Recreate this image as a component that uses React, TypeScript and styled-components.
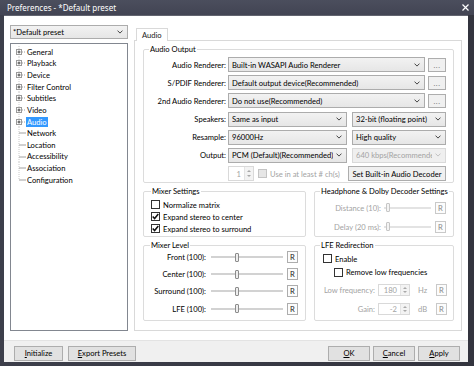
import React from 'react';
import styled, { createGlobalStyle } from 'styled-components';

const GlobalStyle = createGlobalStyle`
  html, body { margin: 0; padding: 0; background: #2f3038; }
  body {
    font-family: Lato, "Noto Sans", sans-serif;
    font-size: 7.6px;
    color: #000;
  }
  * { box-sizing: border-box; }
`;

const Window = styled.div`
  width: 474px;
  height: 366px;
  display: flex;
  flex-direction: column;
  background: linear-gradient(to right, #3d3f4b, #33343e);
`;

const TitleBar = styled.div`
  height: 15px;
  flex: none;
  display: flex;
  align-items: center;
  justify-content: space-between;
  padding: 0 5px 0 7px;
  color: #fff;
  font-family: "Noto Sans", sans-serif;
  font-size: 8px;
  background: linear-gradient(#4b4e5d, #424453);
`;

const Client = styled.div`
  flex: 1;
  margin: 0 6px 4px 4px;
  background: #fff;
  display: flex;
  flex-direction: column;
  border-top: 1px solid #62646f;
  min-height: 0;
`;

const Main = styled.div`
  flex: 1;
  display: flex;
  gap: 6px;
  padding: 9px 6px 9px 6px;
  min-height: 0;
`;

const LeftCol = styled.div`
  width: 118px;
  flex: none;
  display: flex;
  flex-direction: column;
  gap: 4px;
`;

const RightCol = styled.div`
  flex: 1;
  display: flex;
  flex-direction: column;
  min-width: 0;
`;

const Chevron = ({ color = '#444' }: { color?: string }) => (
  <svg width="6" height="4" viewBox="0 0 6 4">
    <path d="M0.5 0.6 L3 3.1 L5.5 0.6" fill="none" stroke={color} strokeWidth="1" />
  </svg>
);

const ComboBox = styled.div<{ $disabled?: boolean }>`
  display: flex;
  align-items: center;
  gap: 3px;
  height: 15px;
  padding: 0 4px 0 3px;
  border: 1px solid ${p => (p.$disabled ? '#d9d9d9' : '#acacac')};
  background: ${p => (p.$disabled ? '#efefef' : 'linear-gradient(#f2f2f2, #e6e6e6)')};
  color: ${p => (p.$disabled ? '#a3a3a3' : '#000')};
  white-space: nowrap;
  min-width: 0;
`;

const ComboText = styled.span`
  flex: 1;
  min-width: 0;
  overflow: hidden;
`;

const Combo = ({ text, disabled }: { text: string; disabled?: boolean }) => (
  <ComboBox $disabled={disabled}>
    <ComboText>{text}</ComboText>
    <Chevron color={disabled ? '#c0c0c0' : '#444'} />
  </ComboBox>
);

const PresetCombo = styled(ComboBox)`
  height: 14px;
  padding-left: 2px;
`;

const TreeBox = styled.div`
  flex: 1;
  border: 1px solid #828790;
  padding: 2px 0 0 5px;
  display: flex;
  flex-direction: column;
`;

const TreeItem = styled.div`
  height: 11.66px;
  display: flex;
  align-items: center;
`;

const TreeLabel = styled.span<{ $selected?: boolean }>`
  padding: 0 1px;
  line-height: 10.5px;
  background: ${p => (p.$selected ? '#3399ff' : 'transparent')};
  color: ${p => (p.$selected ? '#fff' : '#000')};
  white-space: nowrap;
`;

const TreeConnector = ({ expandable, last }: { expandable: boolean; last: boolean }) => (
  <svg width="10" height="12" viewBox="0 0 10 12">
    <line x1="3" y1="0" x2="3" y2={last ? 6 : 12} stroke="#c8c8c8" strokeWidth="1" strokeDasharray="1 1" />
    <line x1={expandable ? 6 : 3} y1="6" x2="10" y2="6" stroke="#a0a0a0" strokeWidth="1" strokeDasharray={expandable ? '1 1' : '0'} />
    {expandable && (
      <g>
        <rect x="0.5" y="3.5" width="5" height="5" fill="#fff" stroke="#9a9a9a" strokeWidth="1" />
        <line x1="1.5" y1="6" x2="4.5" y2="6" stroke="#444" strokeWidth="1" />
        <line x1="3" y1="4.5" x2="3" y2="7.5" stroke="#444" strokeWidth="1" />
      </g>
    )}
  </svg>
);

const TabStrip = styled.div`
  height: 15px;
  flex: none;
  display: flex;
  align-items: flex-end;
  padding-left: 2px;
`;

const Tab = styled.div`
  height: 13px;
  padding: 0 5px;
  display: flex;
  align-items: center;
  border: 1px solid #d9d9d9;
  border-bottom: none;
  background: #fff;
  margin-bottom: -1px;
  position: relative;
  z-index: 1;
  color: #222;
`;

const Panel = styled.div`
  flex: 1;
  border: 1px solid #d9d9d9;
  padding: 3px 7px 0 8px;
  display: flex;
  flex-direction: column;
  gap: 3.3px;
`;

const Group = styled.fieldset<{ $pad: string; $gap?: number }>`
  margin: 0;
  min-width: 0;
  border: 1px solid #dcdcdc;
  border-radius: 2px;
  padding: ${p => p.$pad};
  display: flex;
  flex-direction: column;
  gap: ${p => p.$gap ?? 0}px;
`;

const Legend = styled.legend<{ $offset: number }>`
  padding: 0 1px;
  margin-left: ${p => p.$offset}px;
  line-height: 11px;
  color: #000;
  white-space: nowrap;
`;

const FormRow = styled.div`
  display: grid;
  grid-template-columns: 78px 1fr;
  column-gap: 2px;
  align-items: center;
  height: 15px;
`;

const FieldLabel = styled.span<{ $disabled?: boolean }>`
  text-align: right;
  white-space: nowrap;
  color: ${p => (p.$disabled ? '#a3a3a3' : '#000')};
`;

const Controls = styled.div<{ $cols: string; $gap: number }>`
  display: grid;
  grid-template-columns: ${p => p.$cols};
  column-gap: ${p => p.$gap}px;
  align-items: center;
  min-width: 0;
`;

const FlexControls = styled.div`
  display: flex;
  align-items: center;
  gap: 4px;
  min-width: 0;
`;

const SmallButton = styled.div<{ $disabled?: boolean; $w?: number }>`
  height: ${p => (p.$w ? 15 : 14)}px;
  width: ${p => (p.$w ? `${p.$w}px` : 'auto')};
  display: flex;
  align-items: center;
  justify-content: center;
  border: 1px solid ${p => (p.$disabled ? '#cfcfcf' : '#adadad')};
  background: ${p => (p.$disabled ? '#f6f6f6' : '#f0f0f0')};
  color: ${p => (p.$disabled ? '#a0a0a0' : '#000')};
  white-space: nowrap;
`;

const DecoderButton = styled(SmallButton)`
  margin-left: auto;
`;

const DotsButton = styled(SmallButton)`
  color: #777;
  letter-spacing: 0.5px;
  align-items: flex-end;
  padding-bottom: 2px;
  line-height: 8px;
`;

const ResetButton = styled.div<{ $disabled?: boolean }>`
  width: 11px;
  height: 12px;
  display: flex;
  align-items: center;
  justify-content: center;
  border: 1px solid ${p => (p.$disabled ? '#c9c9c9' : '#adadad')};
  background: #fcfcfc;
  color: ${p => (p.$disabled ? '#8a8a8a' : '#222')};
`;

const CheckBoxBox = styled.span<{ $disabled?: boolean }>`
  width: 9px;
  height: 9px;
  flex: none;
  display: inline-flex;
  align-items: center;
  justify-content: center;
  border: 1px solid ${p => (p.$disabled ? '#c4c4c4' : '#333')};
  background: ${p => (p.$disabled ? '#e6e6e6' : '#fff')};
`;

const CheckBox = ({ checked, disabled }: { checked?: boolean; disabled?: boolean }) => (
  <CheckBoxBox $disabled={disabled}>
    {checked && (
      <svg width="7" height="7" viewBox="0 0 7 7">
        <path d="M0.7 3.6 L2.6 5.6 L6.3 1.1" fill="none" stroke="#111" strokeWidth="1.5" />
      </svg>
    )}
  </CheckBoxBox>
);

const CheckRow = styled.div<{ $indent?: number; $disabled?: boolean; $top?: number }>`
  height: 12px;
  display: flex;
  align-items: center;
  gap: 3px;
  padding-left: ${p => p.$indent ?? 0}px;
  margin-top: ${p => p.$top ?? 0}px;
  color: ${p => (p.$disabled ? '#a3a3a3' : '#000')};
  white-space: nowrap;
`;

const SpinBox = styled.div<{ $w: number; $h: number }>`
  width: ${p => p.$w}px;
  height: ${p => p.$h}px;
  display: flex;
  border: 1px solid #d9d9d9;
  background: #fff;
  flex: none;
`;

const SpinValue = styled.span`
  flex: 1;
  padding-right: 3px;
  color: #a3a3a3;
  display: flex;
  align-items: center;
  justify-content: flex-end;
`;

const SpinArrows = styled.span`
  width: 9px;
  display: flex;
  flex-direction: column;
  justify-content: space-evenly;
  align-items: center;
  background: #f3f3f3;
  border-left: 1px solid #e4e4e4;
`;

const Spin = ({ value, w, h }: { value: string; w: number; h: number }) => (
  <SpinBox $w={w} $h={h}>
    <SpinValue>{value}</SpinValue>
    <SpinArrows>
      <svg width="4" height="2" viewBox="0 0 4 2"><path d="M0 2 L2 0 L4 2 Z" fill="#a8a8a8" /></svg>
      <svg width="4" height="2" viewBox="0 0 4 2"><path d="M0 0 L2 2 L4 0 Z" fill="#a8a8a8" /></svg>
    </SpinArrows>
  </SpinBox>
);

const SliderTrack = styled.div`
  display: flex;
  align-items: center;
  height: 12px;
  min-width: 0;
`;

const TrackPart = styled.span<{ $grow: number; $disabled?: boolean }>`
  flex: ${p => p.$grow};
  height: 2px;
  background: ${p => (p.$disabled ? '#e3e3e3' : '#d2d2d2')};
`;

const Thumb = styled.span<{ $disabled?: boolean }>`
  width: 4px;
  height: 9px;
  flex: none;
  border: 1px solid ${p => (p.$disabled ? '#c6c6c6' : '#8c8c8c')};
  background: ${p => (p.$disabled ? '#f4f4f4' : '#eeeeee')};
  border-radius: 1px;
`;

const Slider = ({ before, after, disabled }: { before: number; after: number; disabled?: boolean }) => (
  <SliderTrack>
    <TrackPart $grow={before} $disabled={disabled} />
    <Thumb $disabled={disabled} />
    <TrackPart $grow={after} $disabled={disabled} />
  </SliderTrack>
);

const SliderRow = styled.div<{ $cols: string }>`
  display: grid;
  grid-template-columns: ${p => p.$cols};
  align-items: center;
  height: 12px;
`;

const PairRow = styled.div`
  display: grid;
  grid-template-columns: 163px 1fr;
  column-gap: 8px;
`;

const ValueRow = styled.div<{ $top: number }>`
  display: grid;
  grid-template-columns: 56px 32px 1fr 11px;
  column-gap: 3px;
  align-items: center;
  height: 12px;
  margin-top: ${p => p.$top}px;
`;

const Unit = styled.span`
  color: #a3a3a3;
  padding-left: 5px;
`;

const ButtonBar = styled.div`
  height: 22px;
  flex: none;
  display: flex;
  align-items: center;
  justify-content: space-between;
  padding: 3px 8px 0 10px;
  background: #f0f0f0;
  border-top: 1px solid #e3e3e3;
`;

const ButtonGroup = styled.div<{ $gap: number }>`
  display: flex;
  gap: ${p => p.$gap}px;
`;

const DialogButton = styled.div<{ $w: number }>`
  width: ${p => p.$w}px;
  height: 15px;
  display: flex;
  align-items: center;
  justify-content: center;
  border: 1px solid #adadad;
  background: #e1e1e1;
  color: #000;
`;

const Key = styled.span`
  text-decoration: underline;
`;

const treeItems: { label: string; expandable: boolean }[] = [
  { label: 'General', expandable: true },
  { label: 'Playback', expandable: true },
  { label: 'Device', expandable: true },
  { label: 'Filter Control', expandable: true },
  { label: 'Subtitles', expandable: true },
  { label: 'Video', expandable: true },
  { label: 'Audio', expandable: true },
  { label: 'Network', expandable: false },
  { label: 'Location', expandable: false },
  { label: 'Accessibility', expandable: false },
  { label: 'Association', expandable: false },
  { label: 'Configuration', expandable: false },
];

const mixerLevels = ['Front (100):', 'Center (100):', 'Surround (100):', 'LFE (100):'];

export default function App() {
  return (
    <>
      <GlobalStyle />
      <Window>
        <TitleBar>
          <span>Preferences - *Default preset</span>
          <svg width="7" height="7" viewBox="0 0 7 7">
            <path d="M0.5 0.5 L6.5 6.5 M6.5 0.5 L0.5 6.5" stroke="#fff" strokeWidth="1.2" />
          </svg>
        </TitleBar>
        <Client>
          <Main>
            <LeftCol>
              <PresetCombo>
                <ComboText>*Default preset</ComboText>
                <Chevron />
              </PresetCombo>
              <TreeBox>
                {treeItems.map((item, i) => (
                  <TreeItem key={item.label}>
                    <TreeConnector expandable={item.expandable} last={i === treeItems.length - 1} />
                    <TreeLabel $selected={item.label === 'Audio'}>{item.label}</TreeLabel>
                  </TreeItem>
                ))}
              </TreeBox>
            </LeftCol>
            <RightCol>
              <TabStrip>
                <Tab>Audio</Tab>
              </TabStrip>
              <Panel>
                <Group $pad="2px 7px 1px 4px" $gap={3.2}>
                  <Legend $offset={1}>Audio Output</Legend>
                  <FormRow>
                    <FieldLabel>Audio Renderer:</FieldLabel>
                    <Controls $cols="1fr 18px" $gap={3}>
                      <Combo text="Built-in WASAPI Audio Renderer" />
                      <DotsButton>...</DotsButton>
                    </Controls>
                  </FormRow>
                  <FormRow>
                    <FieldLabel>S/PDIF Renderer:</FieldLabel>
                    <Controls $cols="1fr 18px" $gap={3}>
                      <Combo text="Default output device(Recommended)" />
                      <DotsButton>...</DotsButton>
                    </Controls>
                  </FormRow>
                  <FormRow>
                    <FieldLabel>2nd Audio Renderer:</FieldLabel>
                    <Controls $cols="1fr 18px" $gap={3}>
                      <Combo text="Do not use(Recommended)" />
                      <DotsButton>...</DotsButton>
                    </Controls>
                  </FormRow>
                  <FormRow>
                    <FieldLabel>Speakers:</FieldLabel>
                    <Controls $cols="119px 1fr" $gap={5}>
                      <Combo text="Same as input" />
                      <Combo text="32-bit (floating point)" />
                    </Controls>
                  </FormRow>
                  <FormRow>
                    <FieldLabel>Resample:</FieldLabel>
                    <Controls $cols="119px 1fr" $gap={5}>
                      <Combo text="96000Hz" />
                      <Combo text="High quality" />
                    </Controls>
                  </FormRow>
                  <FormRow>
                    <FieldLabel>Output:</FieldLabel>
                    <Controls $cols="119px 1fr" $gap={5}>
                      <Combo text="PCM (Default)(Recommended)" />
                      <Combo text="640 kbps(Recommended)" disabled />
                    </Controls>
                  </FormRow>
                  <FormRow>
                    <span />
                    <FlexControls>
                      <Spin value="1" w={26} h={15} />
                      <CheckRow $disabled>
                        <CheckBox disabled />
                        Use in at least # ch(s)
                      </CheckRow>
                      <DecoderButton $w={98}>Set Built-in Audio Decoder</DecoderButton>
                    </FlexControls>
                  </FormRow>
                </Group>

                <PairRow>
                  <Group $pad="1.5px 4px 1px 7px">
                    <Legend $offset={0}>Mixer Settings</Legend>
                    <CheckRow>
                      <CheckBox />
                      Normalize matrix
                    </CheckRow>
                    <CheckRow>
                      <CheckBox checked />
                      Expand stereo to center
                    </CheckRow>
                    <CheckRow>
                      <CheckBox checked />
                      Expand stereo to surround
                    </CheckRow>
                  </Group>
                  <Group $pad="4.5px 6px 3px 4px" $gap={7}>
                    <Legend $offset={1}>Headphone &amp; Dolby Decoder Settings</Legend>
                    <SliderRow $cols="62px 3px 47px 4px 11px">
                      <FieldLabel $disabled>Distance (10):</FieldLabel>
                      <span />
                      <Slider before={2} after={41} disabled />
                      <span />
                      <ResetButton $disabled>R</ResetButton>
                    </SliderRow>
                    <SliderRow $cols="62px 3px 47px 4px 11px">
                      <FieldLabel $disabled>Delay (20 ms):</FieldLabel>
                      <span />
                      <Slider before={2} after={41} disabled />
                      <span />
                      <ResetButton $disabled>R</ResetButton>
                    </SliderRow>
                  </Group>
                </PairRow>

                <PairRow>
                  <Group $pad="0px 8px 5px 4px" $gap={5.1}>
                    <Legend $offset={2}>Mixer Level</Legend>
                    {mixerLevels.map(l => (
                      <SliderRow key={l} $cols="58px 5px 72px 4px 11px">
                        <FieldLabel>{l}</FieldLabel>
                        <span />
                        <Slider before={24} after={44} />
                        <span />
                        <ResetButton>R</ResetButton>
                      </SliderRow>
                    ))}
                  </Group>
                  <Group $pad="1.7px 6px 4px 4px">
                    <Legend $offset={1}>LFE Redirection</Legend>
                    <CheckRow $indent={4}>
                      <CheckBox />
                      Enable
                    </CheckRow>
                    <CheckRow $indent={15} $top={1.3}>
                      <CheckBox />
                      Remove low frequencies
                    </CheckRow>
                    <ValueRow $top={5.7}>
                      <FieldLabel $disabled>Low frequency:</FieldLabel>
                      <Spin value="180" w={32} h={12} />
                      <Unit>Hz</Unit>
                      <ResetButton $disabled>R</ResetButton>
                    </ValueRow>
                    <ValueRow $top={7}>
                      <FieldLabel $disabled>Gain:</FieldLabel>
                      <Spin value="-2" w={32} h={12} />
                      <Unit>dB</Unit>
                      <ResetButton $disabled>R</ResetButton>
                    </ValueRow>
                  </Group>
                </PairRow>
              </Panel>
            </RightCol>
          </Main>
          <ButtonBar>
            <ButtonGroup $gap={5}>
              <DialogButton $w={49}><Key>I</Key>nitialize</DialogButton>
              <DialogButton $w={68}><Key>E</Key>xport Presets</DialogButton>
            </ButtonGroup>
            <ButtonGroup $gap={3}>
              <DialogButton $w={42}><Key>O</Key>K</DialogButton>
              <DialogButton $w={42}><Key>C</Key>ancel</DialogButton>
              <DialogButton $w={42}><Key>A</Key>pply</DialogButton>
            </ButtonGroup>
          </ButtonBar>
        </Client>
      </Window>
    </>
  );
}
